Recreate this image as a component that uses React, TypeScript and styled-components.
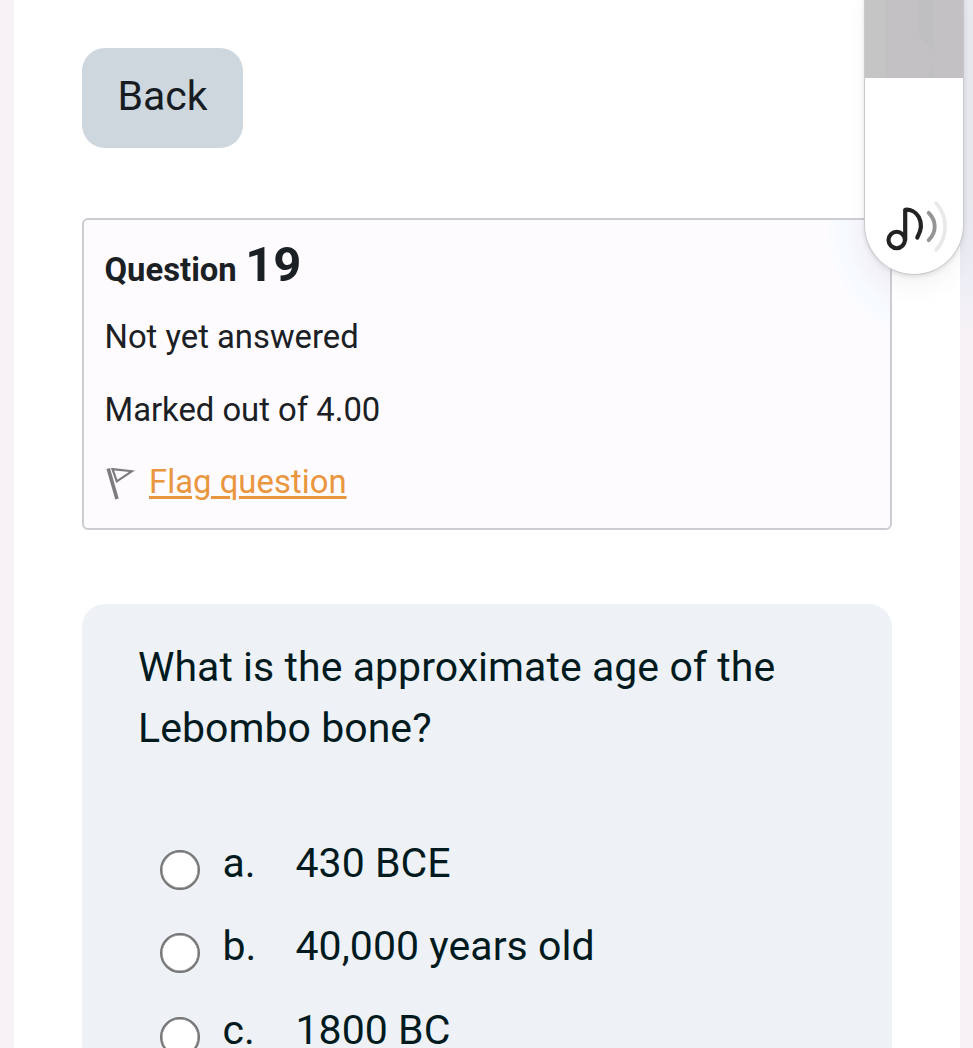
import React from "react";
import styled, { createGlobalStyle } from "styled-components";

const GlobalStyle = createGlobalStyle`
  *, *::before, *::after { box-sizing: border-box; }
  html, body { margin: 0; height: 100%; overflow: hidden; background: #f6f2f6; }
  body { font-family: Roboto, "Liberation Sans", sans-serif; color: #1a2024; }
`;

const Viewport = styled.div`
  position: relative;
  height: 1048px;
  padding: 0 13px 0 14px;
  overflow: hidden;
`;

const Page = styled.main`
  display: flex;
  flex-direction: column;
  align-items: stretch;
  height: 100%;
  padding: 48px 68px 0;
  background: #fff;
`;

const BackButton = styled.button`
  flex: none;
  align-self: flex-start;
  width: 161px;
  height: 100px;
  padding: 0 0 5px;
  border: 0;
  border-radius: 23px;
  background: #ced6de;
  color: #171c22;
  font: 400 41px/60px Roboto, sans-serif;
`;

const InfoCard = styled.section`
  flex: none;
  height: 312px;
  margin-top: 70px;
  padding: 4px 20.5px 0;
  border: 2px solid #cdccd3;
  border-radius: 6px;
  background: #fefbff;
`;

const InfoHeading = styled.h3`
  display: flex;
  align-items: baseline;
  gap: 8.5px;
  height: 77px;
  margin: 0;
  font-size: 32.8px;
  font-weight: 700;
  line-height: 81px;
`;

const QuestionNumber = styled.span`
  font-size: 49px;
`;

const InfoRow = styled.div`
  display: flex;
  align-items: center;
  height: 72.5px;
  font-size: 32.8px;
  line-height: 72px;
`;

const FlagLink = styled.a`
  margin-left: 14.5px;
  color: #e9963e;
  letter-spacing: 0.04px;
  text-decoration: underline;
  text-decoration-thickness: 3px;
  text-underline-offset: 3px;
`;

const QuestionCard = styled.section`
  flex: none;
  height: 600px;
  margin-top: 74px;
  padding: 33px 56px 0;
  border-radius: 23px;
  background: #eef2f7;
  color: #001a1e;
  font-size: 41px;
  letter-spacing: 0.05px;
`;

const QuestionText = styled.p`
  margin: 0 0 63px;
  line-height: 61px;
`;

const AnswerRow = styled.label`
  display: grid;
  grid-template-columns: 62.5px 73px 1fr;
  padding-left: 22px;
  height: 83.3px;
  line-height: 83px;
`;

const Radio = styled.input`
  appearance: none;
  width: 40px;
  height: 40px;
  margin: 28px 0 0;
  border: 2px solid #767676;
  box-shadow: inset 0 0 0 0.5px #767676;
  border-radius: 50%;
  background: #fff;
`;

const Glow = styled.div`
  position: absolute;
  top: 220px;
  left: 828px;
  width: 62px;
  height: 308px;
  overflow: hidden;
  background: radial-gradient(circle at 120px 5px, #f8f6fc 80px, #f6f8fe 96px, #f7fbff 112px, transparent 124px);
`;

const VolumePill = styled.aside`
  position: absolute;
  top: -10px;
  left: 864px;
  width: 100px;
  height: 284.5px;
  border: 1px solid #c8c9cd;
  border-top: 0;
  border-radius: 0 0 50px 50px;
  background: #fff;
  box-shadow: 0 2px 4px rgba(60, 60, 80, 0.13), 0 14px 20px rgba(80, 70, 80, 0.05);
  overflow: hidden;
`;

const EdgeShade = styled.div`
  position: absolute;
  top: 0;
  right: 0;
  width: 13px;
  height: 330px;
  background: linear-gradient(#e9e9f0 0 60%, #eeeef6 85%, #f6f2f6);
`;

const VolumeLevel = styled.div`
  height: 88px;
  background: linear-gradient(90deg, #c4c5c4 0 20%, #c3c1c3 21% 100%);
`;

const LevelShade = styled.svg`
  display: block;
  width: 98px;
  height: 88px;
`;

const NoteIcon = styled.svg`
  position: absolute;
  top: 206.5px;
  left: 20px;
  width: 64px;
  height: 56px;
`;

const FlagSvg = styled.svg`
  flex: none;
  width: 30px;
  height: 34px;
  margin-top: 4px;
`;

const answers = [
  { letter: "a.", text: "430 BCE" },
  { letter: "b.", text: "40,000 years old" },
  { letter: "c.", text: "1800 BC" },
];

function FlagIcon() {
  return (
    <FlagSvg viewBox="0 0 30 34" fill="none" stroke="#7d7b7f">
      <path d="M3.2 1.5 L12 32" strokeWidth="3.6" />
      <path d="M7.5 2.2 L27 4.2 L11.8 14.3 Z" strokeWidth="2.2" />
    </FlagSvg>
  );
}

export default function App() {
  return (
    <>
      <GlobalStyle />
      <Viewport>
        <Page>
          <BackButton>Back</BackButton>
          <InfoCard>
            <InfoHeading>
              <span>Question</span>
              <QuestionNumber>19</QuestionNumber>
            </InfoHeading>
            <InfoRow>Not yet answered</InfoRow>
            <InfoRow>Marked out of 4.00</InfoRow>
            <InfoRow>
              <FlagIcon />
              <FlagLink>Flag question</FlagLink>
            </InfoRow>
          </InfoCard>
          <QuestionCard>
            <QuestionText>
              What is the approximate age of the
              <br />
              Lebombo bone?
            </QuestionText>
            {answers.map((a) => (
              <AnswerRow key={a.letter}>
                <Radio type="radio" name="answer" />
                <span>{a.letter}</span>
                <span>{a.text}</span>
              </AnswerRow>
            ))}
          </QuestionCard>
        </Page>
        <Glow />
        <EdgeShade />
        <VolumePill>
          <VolumeLevel>
            <LevelShade viewBox="0 0 98 88">
              <path d="M54 10H68V61L54 46Z" fill="#bfbec0" />
              <path d="M68 73V88H61Z" fill="#bfbec0" />
            </LevelShade>
          </VolumeLevel>
          <NoteIcon viewBox="0 0 64 56" fill="none" strokeLinecap="round" strokeLinejoin="round">
            <circle cx="11.7" cy="43" r="8.2" stroke="#222" strokeWidth="4.1" />
            <path d="M20.2 43V12.8C31 11.5 41.5 24 32.3 40.6" stroke="#222" strokeWidth="4.2" />
            <path d="M43.7 15.9C51.7 24 51.7 35 43.7 43.2" stroke="#969496" strokeWidth="3.9" />
            <path d="M51.2 6.2C63 19 63 40 51.2 53" stroke="#e9e7e9" strokeWidth="3.6" />
          </NoteIcon>
        </VolumePill>
      </Viewport>
    </>
  );
}
